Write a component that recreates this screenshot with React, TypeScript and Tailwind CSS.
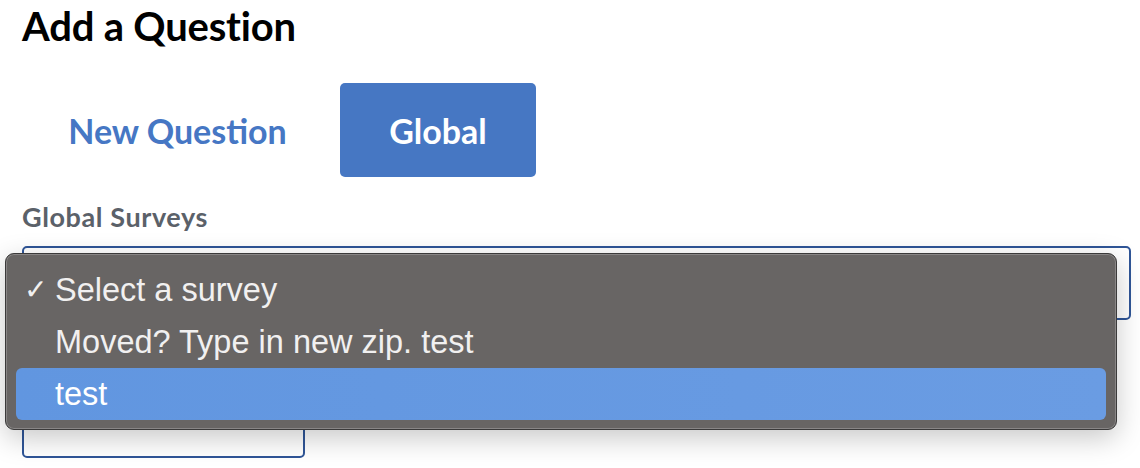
import React from "react";

export default function App() {
  return (
    <div className="relative w-[1140px] h-[468px] overflow-hidden bg-white" style={{ fontFamily: "Lato, 'Open Sans', sans-serif" }}>
      <div className="flex flex-col pl-[22px] pr-[9px]">
        <h1 className="mt-[3px] text-[40px] leading-[47px] font-bold text-black tracking-[-0.2px]">Add a Question</h1>
        <div className="mt-[33px] flex gap-[7px]">
          <button className="h-[94px] w-[311px] rounded-[5px] text-[34px] font-bold text-[#4677c4]">New Question</button>
          <button className="h-[94px] w-[196px] rounded-[5px] bg-[#4677c3] text-[34px] font-bold text-white">Global</button>
        </div>
        <div className="mt-[24px] text-[27px] leading-[32px] font-bold tracking-[0.6px] text-[#5b6169]">Global Surveys</div>
        <div className="mt-[13px] h-[74px] w-full rounded-[5px] border-2 border-[#2f5597] bg-white"></div>
        <div className="mt-[62px] flex h-[76px] w-[283px] items-end justify-center rounded-[5px] border-2 border-[#2f5597] bg-white pb-[18px] text-[32px] font-bold text-[#2f5597]">
          Add
        </div>
      </div>

      <div
        className="absolute left-[5px] top-[253px] w-[1112px] h-[177px] rounded-[9px] border border-[#3b3a3a] bg-[#686564] px-[10px] py-[10px] shadow-[0_8px_28px_rgba(0,0,0,0.22),inset_0_0_0_1px_rgba(255,255,255,0.22)]"
        style={{ fontFamily: "'Liberation Sans', Arial, sans-serif" }}
      >
        <div className="flex h-[52px] items-center text-[32.5px] text-[#f1f0f0]">
          <span className="w-[39px] pl-[8px] text-[28px]">✓</span>
          <span>Select a survey</span>
        </div>
        <div className="flex h-[52px] items-center pl-[39px] text-[32.5px] text-[#f1f0f0]">
          Moved? Type in new zip. test
        </div>
        <div className="flex h-[52px] items-center rounded-[6px] bg-gradient-to-r from-[#6196e0] to-[#6a9ce3] pl-[39px] text-[32.5px] text-white">
          test
        </div>
      </div>
    </div>
  );
}
